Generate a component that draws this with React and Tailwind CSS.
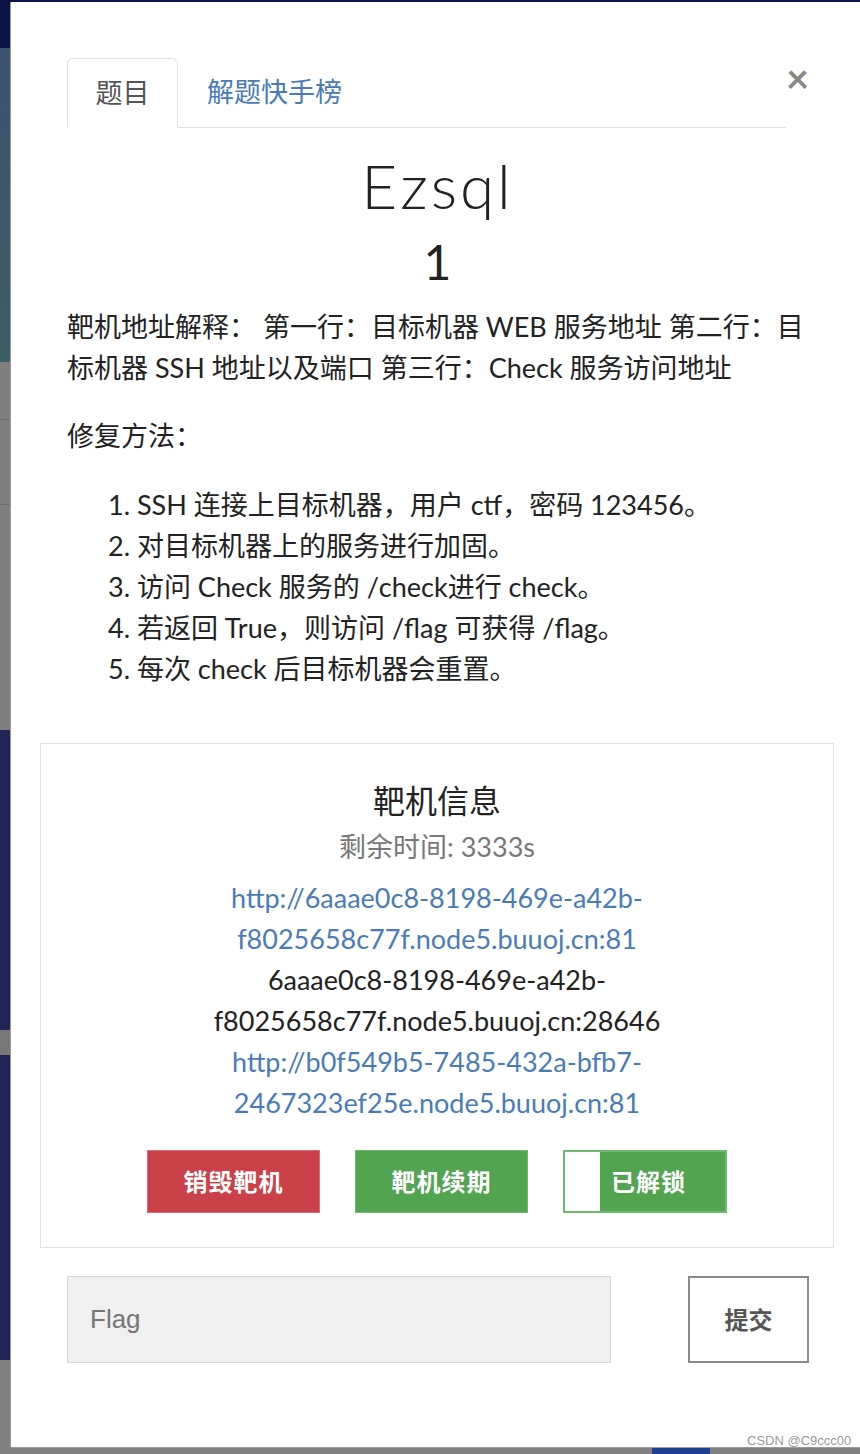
export default function App() {
  const steps = [
    "SSH 连接上目标机器，用户 ctf，密码 123456。",
    "对目标机器上的服务进行加固。",
    "访问 Check 服务的 /check进行 check。",
    "若返回 True，则访问 /flag 可获得 /flag。",
    "每次 check 后目标机器会重置。",
  ];

  return (
    <div className="relative h-[1454px] w-[860px] overflow-hidden bg-[#808080] font-['Lato','Noto_Sans_CJK_SC',sans-serif]">
      {/* page behind the modal */}
      <div className="flex h-full flex-col">
        <div className="h-[48px] bg-[#0b1446]" />
        <div className="h-[314px] bg-gradient-to-b from-[#3c5271] to-[#3d5e67]" />
        <div className="h-[58px] border-b border-[#6c6c6c] bg-[#7f7f7f]" />
        <div className="h-[85px] border-b border-[#6c6c6c] bg-[#7f7f7f]" />
        <div className="h-[225px] bg-[#7f7f7f]" />
        <div className="h-[300px] bg-[#202456]" />
        <div className="h-[25px] bg-[#787878]" />
        <div className="h-[305px] bg-[#202456]" />
        <div className="flex flex-1 items-end bg-[#808080]">
          <div className="ml-[652px] h-[7px] w-[58px] bg-[#1f3f8f]" />
        </div>
      </div>

      {/* modal */}
      <div className="absolute left-[11px] right-0 top-[2px] h-[1445px] bg-white shadow-[-1px_0_0_#9a9a9a,0_1px_0_#9a9a9a]">
        <div className="pl-[56px] pr-[52px] pt-[56px] text-[27px] text-[#222]">
          {/* tabs */}
          <div className="flex items-start">
            <div className="flex flex-1 border-b border-[#e2e2e2]">
              <div className="-mb-px flex h-[70px] w-[111px] items-center justify-center rounded-t-[6px] border border-[#e2e2e2] border-b-white bg-white text-[27px] text-[#555]">
                题目
              </div>
              <div className="flex h-[69px] items-center pl-[29px] text-[27px] text-[#4a7bb7]">
                解题快手榜
              </div>
            </div>
            <button className="w-[22px] text-center text-[40px] font-bold leading-none text-[#888]">
              ×
            </button>
          </div>

          {/* title */}
          <h1 className="mt-[26px] text-center text-[62px] font-light leading-none tracking-[3px] text-[#222]">
            Ezsql
          </h1>
          <div className="mt-[22px] text-center text-[48px] leading-none text-[#222]">1</div>

          {/* description */}
          <p className="mt-[20px] leading-[41px]">
            靶机地址解释： 第一行：目标机器 WEB 服务地址 第二行：目
            <br />
            标机器 SSH 地址以及端口 第三行：Check 服务访问地址
          </p>
          <p className="mt-[27px] leading-[41px]">修复方法：</p>
          <ol className="mt-[28px] list-inside list-decimal pl-[41px] leading-[41px]">
            {steps.map((s) => (
              <li key={s}>{s}</li>
            ))}
          </ol>
        </div>

        {/* target machine card */}
        <div className="ml-[29px] mr-[26px] mt-[54px] border border-[#e2e2e2] pb-[34px] pt-[36px] text-center">
          <div className="text-[32px] leading-[42px] text-[#222]">靶机信息</div>
          <div className="mt-[4px] text-[27px] leading-[41px] text-[#777]">剩余时间: 3333s</div>
          <div className="mt-[10px] text-[27px] leading-[41px]">
            <div className="text-[#4a7bb7]">
              http://6aaae0c8-8198-469e-a42b-
              <br />
              f8025658c77f.node5.buuoj.cn:81
            </div>
            <div className="text-[#222]">
              6aaae0c8-8198-469e-a42b-
              <br />
              f8025658c77f.node5.buuoj.cn:28646
            </div>
            <div className="text-[#4a7bb7]">
              http://b0f549b5-7485-432a-bfb7-
              <br />
              2467323ef25e.node5.buuoj.cn:81
            </div>
          </div>

          <div className="mt-[27px] flex justify-center gap-[35px]">
            <button className="h-[63px] w-[173px] border border-[#e06a70] bg-[#ca4149] text-[24px] font-bold tracking-[1px] text-white">
              销毁靶机
            </button>
            <button className="h-[63px] w-[173px] border border-[#6cba6a] bg-[#52a450] text-[24px] font-bold tracking-[1px] text-white">
              靶机续期
            </button>
            <button className="flex h-[63px] w-[164px] border-2 border-[#6cba6a] bg-[#52a450] text-[24px] font-bold tracking-[1px] text-white">
              <span className="h-full w-[35px] bg-white" />
              <span className="flex h-full items-center pl-[11px]">已解锁</span>
            </button>
          </div>
        </div>

        {/* flag submit */}
        <div className="mt-[28px] flex justify-between pl-[56px] pr-[51px]">
          <input
            placeholder="Flag"
            className="h-[87px] w-[544px] border border-[#d6d9dc] bg-[#f0f0f0] px-[22px] font-['Liberation_Sans',sans-serif] text-[26px] text-[#333] outline-none placeholder:text-[#757575]"
          />
          <button className="h-[87px] w-[121px] border-2 border-[#8a8a8a] bg-white text-[24px] font-bold text-[#555]">
            提交
          </button>
        </div>
      </div>

      <div className="absolute left-[747px] top-[1431px] font-['Liberation_Sans',sans-serif] text-[13px] text-[#9a9a9a]">
        CSDN @C9ccc00
      </div>
    </div>
  );
}
